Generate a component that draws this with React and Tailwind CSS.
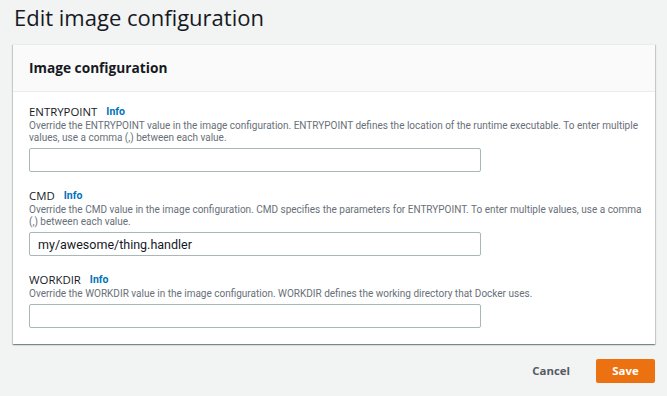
export default function App() {
  const fields = [
    {
      id: 'entrypoint',
      label: 'ENTRYPOINT',
      desc: [
        'Override the ENTRYPOINT value in the image configuration. ENTRYPOINT defines the location of the runtime executable. To enter multiple',
        'values, use a comma (,) between each value.',
      ],
      value: '',
    },
    {
      id: 'cmd',
      label: 'CMD',
      desc: [
        'Override the CMD value in the image configuration. CMD specifies the parameters for ENTRYPOINT. To enter multiple values, use a comma',
        '(,) between each value.',
      ],
      value: 'my/awesome/thing.handler',
    },
    {
      id: 'workdir',
      label: 'WORKDIR',
      desc: ['Override the WORKDIR value in the image configuration. WORKDIR defines the working directory that Docker uses.'],
      value: '',
    },
  ]

  return (
    <div className="min-h-screen bg-[#f2f3f3] pl-[13px] pr-[12px] font-['Open_Sans',sans-serif] text-[#16191f]">
      {/* Title */}
      <h1 className="h-[44px] pl-px pt-[3px] text-[22px] leading-[28px] font-normal">Edit image configuration</h1>

      {/* Card */}
      <div className="bg-white border-t border-[#eaeded] shadow-[0_1px_1px_0_rgba(0,28,36,0.3),1px_1px_1px_0_rgba(0,28,36,0.15),-1px_1px_1px_0_rgba(0,28,36,0.15)]">
        <div className="h-[47px] flex items-center px-4 bg-[#fafafa] border-b border-[#eaeded]">
          <h2 className="text-[13.7px] font-bold leading-[18px]">Image configuration</h2>
        </div>
        <div className="px-4 pt-3 pb-4 flex flex-col gap-4">
          {fields.map((f) => (
            <div key={f.id}>
              <div className="flex items-center gap-[9px] h-4">
                <label className="text-[11.4px] leading-4">{f.label}</label>
                <a className="leading-4 font-bold text-[#0073bb] font-['Roboto',sans-serif] text-[10.5px]">Info</a>
              </div>
              <p className="font-['Roboto',sans-serif] text-[10px] leading-3 text-[#687078] whitespace-nowrap">
                {f.desc.map((line, i) => (
                  <span key={i} className="block">{line}</span>
                ))}
              </p>
              <input
                defaultValue={f.value}
                className="mt-1 block w-[452px] h-6 px-2 rounded-[2px] border border-[#aab7b8] bg-white font-['Roboto',sans-serif] text-[12.5px] text-[#16191f] outline-none"
              />
            </div>
          ))}
        </div>
      </div>

      {/* Footer */}
      <div className="flex justify-end items-center pt-[15px]">
        <button className="px-5 h-6 text-[11.4px] font-bold text-[#545b64] mr-[6px]">Cancel</button>
        <button className="w-[59px] h-6 bg-[#ec7211] text-white text-[11.4px] font-bold rounded-[2px]">Save</button>
      </div>
    </div>
  )
}
